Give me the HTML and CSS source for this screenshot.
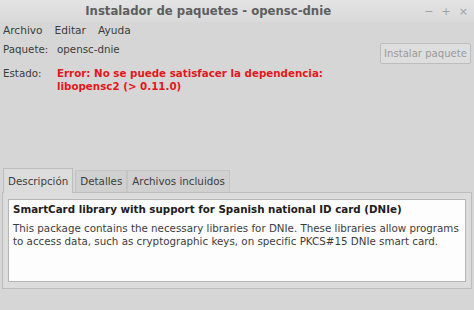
FILE: index.html
```html
<!DOCTYPE html>
<html lang="es">
<head>
    <meta charset="UTF-8" />
    <title>Instalador de paquetes - opensc-dnie</title>
    <link rel="stylesheet" href="styles.css">
</head>
<body>
    <div class="window">
        <div class="titlebar">
            <div class="title">Instalador de paquetes - opensc-dnie</div>
            <div class="wm-buttons">
                <span>&minus;</span>
                <span>+</span>
                <span>&times;</span>
            </div>
        </div>

        <div class="menubar">
            <span>Archivo</span>
            <span>Editar</span>
            <span>Ayuda</span>
        </div>

        <div class="info">
            <div class="row">
                <div class="label">Paquete:</div>
                <div class="value">opensc-dnie</div>
                <button class="install" disabled>Instalar paquete</button>
            </div>
            <div class="row status">
                <div class="label">Estado:</div>
                <div class="value error">Error: No se puede satisfacer la dependencia:<br>libopensc2 (&gt; 0.11.0)</div>
            </div>
        </div>

        <div class="notebook">
            <div class="tabs">
                <div class="tab active">Descripción</div>
                <div class="tab">Detalles</div>
                <div class="tab">Archivos incluidos</div>
            </div>
            <div class="page">
                <div class="textbox">
                    <div class="summary">SmartCard library with support for Spanish national ID card (DNIe)</div>
                    <p>This package contains the necessary libraries for DNIe. These libraries allow programs to access data, such as cryptographic keys, on specific PKCS#15 DNIe smart card.</p>
                </div>
            </div>
        </div>
    </div>
</body>
</html>
```

FILE: styles.css
```css
body {
    margin: 0;
    font-family: "DejaVu Sans", sans-serif;
    font-size: 10.3px;
    color: #3c3c3c;
    background: #d6d6d6;
}

.window {
    width: 474px;
    height: 310px;
    display: flex;
    flex-direction: column;
    background: #d6d6d6;
}

.titlebar {
    height: 22px;
    display: flex;
    align-items: center;
    background: linear-gradient(#e4e4e4, #d9d9d9);
}

.title {
    flex: 1;
    text-align: center;
    padding-right: 8px;
    font-weight: bold;
    font-size: 11.7px;
    color: #5e5e5e;
}

.wm-buttons {
    display: flex;
    gap: 8px;
    padding-right: 6px;
    color: #a0a0a0;
    font-size: 11px;
}

.menubar {
    display: flex;
    gap: 12px;
    padding: 0 3px;
    height: 16px;
    align-items: center;
    font-size: 10.6px;
}

.info {
    padding: 0 3px;
}

.row {
    display: flex;
    align-items: flex-start;
}

.label {
    width: 54px;
    line-height: 13px;
    padding-top: 5px;
}

.value {
    flex: 1;
    line-height: 13px;
    padding-top: 5px;
}

.status .label,
.status .value {
    padding-top: 3px;
}

.error {
    color: #e3181c;
    font-weight: bold;
}

.install {
    margin: 5px 0 0 0;
    width: 91px;
    height: 21px;
    padding: 0;
    font-family: inherit;
    font-size: 10.1px;
    color: #9a9a9a;
    background: #dedede;
    border: 1px solid #bdbdbd;
    border-radius: 2px;
}

.notebook {
    margin-top: auto;
    padding: 0 2px 21px;
}

.tabs {
    display: flex;
    padding-left: 1px;
    align-items: flex-end;
    height: 24px;
}

.tab {
    height: 21px;
    line-height: 21px;
    padding: 0 4px;
    border: 1px solid #c4c4c4;
    border-bottom: none;
    background: #d0d0d0;
}

.tab.active {
    height: 24px;
    line-height: 24px;
    background: #dcdcdc;
    border-color: #bdbdbd;
    margin-right: 2px;
    position: relative;
    top: 1px;
}

.page {
    height: 97px;
    box-sizing: border-box;
    border: 1px solid #bdbdbd;
    background: #dcdcdc;
    padding: 6px 5px 6px 5px;
}

.textbox {
    height: 100%;
    box-sizing: border-box;
    background: #fdfdfd;
    border: 1px solid #b6b6b6;
    padding: 2px 4px;
}

.summary {
    font-weight: bold;
    color: #202020;
    line-height: 14px;
}

.textbox p {
    margin: 6px 0 0;
    line-height: 13px;
}
```
